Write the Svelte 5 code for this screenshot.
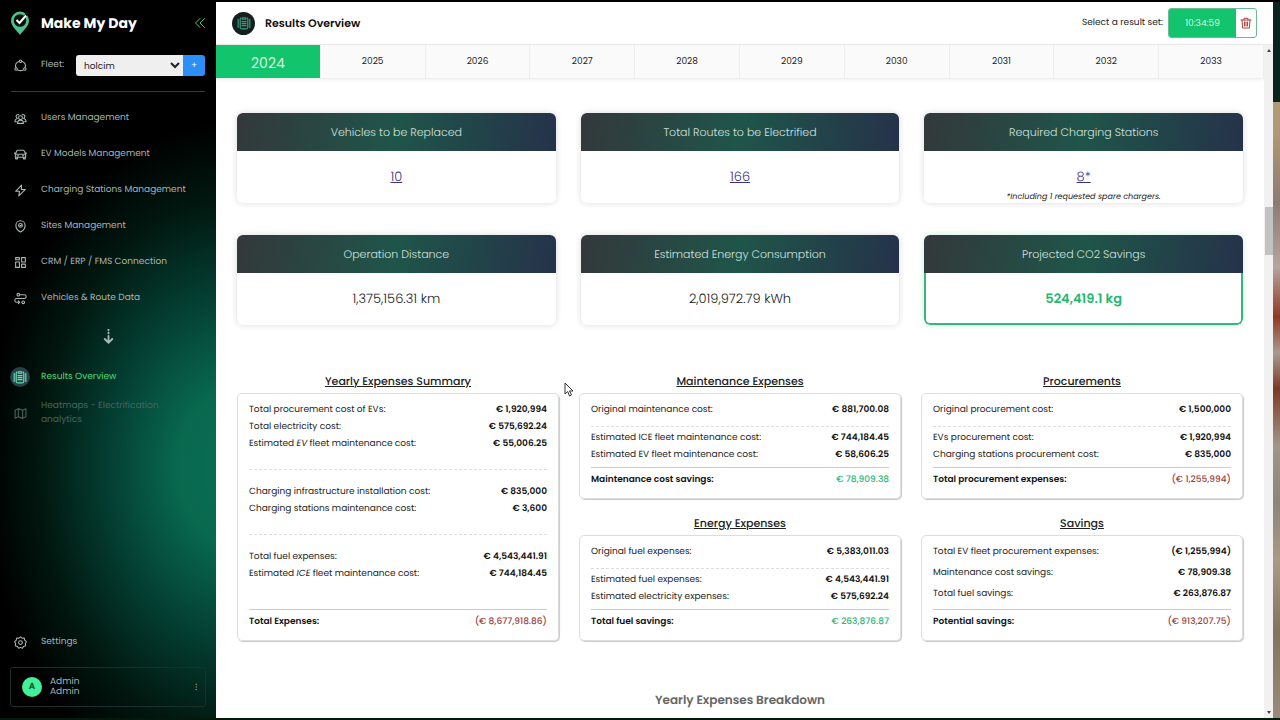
<script lang="ts">
	type Row = { label: string; em?: string; rest?: string; value: string };
	type Sheet = {
		title: string;
		groups: Row[][];
		total: Row;
		tone: 'good' | 'bad';
		kind?: 'tall' | 'loose';
	};

	const menu = [
		{ icon: 'users', label: 'Users Management' },
		{ icon: 'car', label: 'EV Models Management' },
		{ icon: 'bolt', label: 'Charging Stations Management' },
		{ icon: 'pin', label: 'Sites Management' },
		{ icon: 'grid', label: 'CRM / ERP / FMS Connection' },
		{ icon: 'route', label: 'Vehicles & Route Data' }
	];

	const years = [2024, 2025, 2026, 2027, 2028, 2029, 2030, 2031, 2032, 2033];
	let year = $state(2024);
	let fleet = $state('holcim');

	const stats = [
		{ title: 'Vehicles to be Replaced', value: '10', link: true },
		{ title: 'Total Routes to be Electrified', value: '166', link: true },
		{
			title: 'Required Charging Stations',
			value: '8*',
			link: true,
			note: '*Including 1 requested spare chargers.'
		},
		{ title: 'Operation Distance', value: '1,375,156.31 km' },
		{ title: 'Estimated Energy Consumption', value: '2,019,972.79 kWh' },
		{ title: 'Projected CO2 Savings', value: '524,419.1 kg', highlight: true }
	];

	const sheets: Sheet[] = [
		{
			title: 'Yearly Expenses Summary',
			kind: 'tall',
			groups: [
				[
					{ label: 'Total procurement cost of EVs:', value: '€ 1,920,994' },
					{ label: 'Total electricity cost:', value: '€ 575,692.24' },
					{ label: 'Estimated ', em: 'EV', rest: ' fleet maintenance cost:', value: '€ 55,006.25' }
				],
				[
					{ label: 'Charging infrastructure installation cost:', value: '€ 835,000' },
					{ label: 'Charging stations maintenance cost:', value: '€ 3,600' }
				],
				[
					{ label: 'Total fuel expenses:', value: '€ 4,543,441.91' },
					{ label: 'Estimated ', em: 'ICE', rest: ' fleet maintenance cost:', value: '€ 744,184.45' }
				]
			],
			total: { label: 'Total Expenses:', value: '(€ 8,677,918.86)' },
			tone: 'bad'
		},
		{
			title: 'Maintenance Expenses',
			groups: [
				[{ label: 'Original maintenance cost:', value: '€ 881,700.08' }],
				[
					{ label: 'Estimated ICE fleet maintenance cost:', value: '€ 744,184.45' },
					{ label: 'Estimated EV fleet maintenance cost:', value: '€ 58,606.25' }
				]
			],
			total: { label: 'Maintenance cost savings:', value: '€ 78,909.38' },
			tone: 'good'
		},
		{
			title: 'Procurements',
			groups: [
				[{ label: 'Original procurement cost:', value: '€ 1,500,000' }],
				[
					{ label: 'EVs procurement cost:', value: '€ 1,920,994' },
					{ label: 'Charging stations procurement cost:', value: '€ 835,000' }
				]
			],
			total: { label: 'Total procurement expenses:', value: '(€ 1,255,994)' },
			tone: 'bad'
		},
		{
			title: 'Energy Expenses',
			groups: [
				[{ label: 'Original fuel expenses:', value: '€ 5,383,011.03' }],
				[
					{ label: 'Estimated fuel expenses:', value: '€ 4,543,441.91' },
					{ label: 'Estimated electricity expenses:', value: '€ 575,692.24' }
				]
			],
			total: { label: 'Total fuel savings:', value: '€ 263,876.87' },
			tone: 'good'
		},
		{
			title: 'Savings',
			kind: 'loose',
			groups: [
				[
					{ label: 'Total EV fleet procurement expenses:', value: '(€ 1,255,994)' },
					{ label: 'Maintenance cost savings:', value: '€ 78,909.38' },
					{ label: 'Total fuel savings:', value: '€ 263,876.87' }
				]
			],
			total: { label: 'Potential savings:', value: '(€ 913,207.75)' },
			tone: 'bad'
		}
	];
</script>

{#snippet icon(name: string)}
	<svg class="icon" viewBox="0 0 24 24" aria-hidden="true">
		{#if name === 'users'}
			<circle cx="12" cy="10.500" r="3.500" />
			<path d="M6.500 21c0-3.800 2.300-6 5.500-6s5.500 2.200 5.500 6z" />
			<path d="M6.500 11.500A3.500 3.500 0 1 1 9 5M17.500 11.500A3.500 3.500 0 1 0 15 5M1.500 18c.2-3 1.600-5 4-6M22.500 18c-.2-3-1.600-5-4-6M1.500 18h3M19.500 18h3" />
		{:else if name === 'car'}
			<path d="M2.500 11.500 5 5.500Q5.500 4 7 4h10q1.500 0 2 1.500l2.500 6V17h-19zM2.500 11.500h19M3 17v3h3.500v-3M17.500 17v3H21v-3M6 14.300h2.500M15.500 14.300H18M1 9.500h2M21 9.500h2" />
		{:else if name === 'bolt'}
			<path d="M14 2 3 13.500h7L9 22l12-12h-7.500z" />
		{:else if name === 'pin'}
			<path d="M12 22c-3-1.500-8.500-5.500-8.500-12a8.500 8.500 0 0 1 17 0c0 6.500-5.500 10.500-8.500 12z" />
			<circle cx="12" cy="10" r="3.500" />
			<path d="m11 10 1 1 2-2" />
		{:else if name === 'grid'}
			<path d="M3 3h7v4H3zM3 11h7v10H3zM14 3h7v8h-7zM14 15h7v6h-7z" />
		{:else if name === 'route'}
			<circle cx="8" cy="5" r="2.500" />
			<circle cx="17" cy="19" r="2.500" />
			<path d="M10.500 5H19a3.500 3.500 0 0 1 0 7H5a3.500 3.500 0 0 0 0 7h5M8 16.500l2.500 2.500L8 21.500" />
		{:else if name === 'fleet'}
			<path d="M9 4.500a8 8 0 0 0-5.500 11M15 4.500a8 8 0 0 1 5.500 11M7 20.500q5 2 10 0" />
			<circle cx="12" cy="4" r="2.300" />
			<circle cx="4" cy="18.500" r="2.300" />
			<circle cx="20" cy="18.500" r="2.300" />
		{:else if name === 'map'}
			<path d="m2 6 6-3 8 3 6-3v15l-6 3-8-3-6 3zM8 3v15M16 6v15" />
		{:else if name === 'clipboard'}
			<path d="M9 3h6v2.500H9zM8.500 9.500h7M8.500 13h7M8.500 16.500h7M8 22h8" />
			<path d="M6.500 3.500Q5.500 4 5.500 6v13q0 2 1 2.500M17.500 3.500q1 .5 1 2.500v13q0 2-1 2.500M2 5.500v14M22 5.500v14" />
		{:else if name === 'gear'}
			<path d="m12 1.500 3 2.500 4-.3.800 4 3 2.800-1.800 3.500.500 4-3.800 1.200L15.500 22.500 12 21l-3.500 1.500-2.200-3.300L2.500 18l.500-4-1.800-3.500 3-2.800.8-4L9 4z" />
			<circle cx="12" cy="12.200" r="3.500" />
		{:else if name === 'down'}
			<path d="M12 1v1M12 6v1M12 11v10M6 16l6 6 6-6" />
		{:else if name === 'collapse'}
			<path d="m12 3-9 9 9 9M21 3l-9 9 9 9" />
		{:else if name === 'trash'}
			<path d="M2 6h20M8 6V2.500h8V6M4 6l1.200 16h13.600L20 6M9 10v8M12 10v8M15 10v8" />
		{/if}
	</svg>
{/snippet}

{#snippet line(row: Row)}
	<div class="line">
		<dt>{row.label}{#if row.em}<em>{row.em}</em>{row.rest}{/if}</dt>
		<dd>{row.value}</dd>
	</div>
{/snippet}

<div class="desktop">
	<aside class="sidebar">
		<div class="brand">
			<svg class="logo" viewBox="0 0 20 24" aria-hidden="true">
				<path class="drop" d="M10 24C7 19.500 1 15.500 1 9.500a9 9 0 0 1 18 0C19 15.500 13 19.500 10 24z" />
				<circle cx="10" cy="9.500" r="6.300" />
				<path class="gap" d="m14 6 4.500-4.500" />
				<path class="tick" d="m6.500 9 3 3L16 4.500" />
			</svg>
			<strong>Make My Day</strong>
			<button class="collapse" aria-label="Collapse menu">{@render icon('collapse')}</button>
		</div>

		<div class="fleet">
			{@render icon('fleet')}
			<label for="fleet">Fleet:</label>
			<select id="fleet" bind:value={fleet}>
				<option value="holcim">holcim</option>
			</select>
			<button aria-label="Add fleet">+</button>
		</div>

		<nav>
			{#each menu as item}
				<a href="#{item.icon}">{@render icon(item.icon)}<span>{item.label}</span></a>
			{/each}
			<div class="down">{@render icon('down')}</div>
			<a class="active" href="#results">
				<i class="badge">{@render icon('clipboard')}</i><span>Results Overview</span>
			</a>
			<a class="muted" href="#heatmaps">{@render icon('map')}<span>Heatmaps - Electrification analytics</span></a>
			<a class="settings" href="#settings">{@render icon('gear')}<span>Settings</span></a>
		</nav>

		<div class="account">
			<span class="avatar">A</span>
			<div class="who">
				<span>Admin</span>
				<span>Admin</span>
			</div>
			<button aria-label="Account menu">⁝</button>
		</div>
	</aside>

	<main>
		<header>
			<i class="badge dark">{@render icon('clipboard')}</i>
			<h1>Results Overview</h1>
			<span class="pick">Select a result set:</span>
			<div class="result-set">
				<button class="time">10:34:59</button>
				<button class="delete" aria-label="Delete result set">{@render icon('trash')}</button>
			</div>
		</header>

		<div class="body">
			<div class="page">
				<div class="years">
					{#each years as y}
						<button class:selected={y === year} onclick={() => (year = y)}>{y}</button>
					{/each}
				</div>

				<section class="stats">
					{#each stats as stat}
						<article class="stat" class:highlight={stat.highlight}>
							<h2>{stat.title}</h2>
							<div class="value">
								{#if stat.link}
									<a href="#details">{stat.value}</a>
								{:else}
									<span>{stat.value}</span>
								{/if}
								{#if stat.note}<small>{stat.note}</small>{/if}
							</div>
						</article>
					{/each}
				</section>

				<section class="sheets">
					{#each sheets as sheet}
						<article class="sheet {sheet.kind ?? ''}">
							<h3>{sheet.title}</h3>
							<dl>
								{#each sheet.groups as group}
									<div class="group">
										{#each group as row}
											{@render line(row)}
										{/each}
									</div>
								{/each}
								<div class="total {sheet.tone}">{@render line(sheet.total)}</div>
							</dl>
						</article>
					{/each}
				</section>

				<h2 class="breakdown">Yearly Expenses Breakdown</h2>
			</div>

			<div class="scrollbar" aria-hidden="true">
				<i class="up"></i>
				<i class="thumb"></i>
				<i class="end"></i>
			</div>
		</div>
	</main>

	<div class="wallpaper"></div>

	<svg class="cursor" viewBox="0 0 10 15" aria-hidden="true">
		<path d="M1 1v11l2.700-2.500L5.500 14l2-1-2-4H9z" />
	</svg>
</div>

<style>
	:global(body) {
		margin: 0;
		background: #000;
	}

	.desktop,
	.desktop * {
		box-sizing: border-box;
	}

	.desktop {
		position: relative;
		display: flex;
		min-height: 100vh;
		padding: 2px 0;
		background: linear-gradient(#000 50%, #04180c 50%);
		font-family: Poppins, Inter, 'Open Sans', sans-serif;
		font-size: 9px;
		color: #222;
		text-rendering: geometricPrecision;
	}

	button {
		margin: 0;
		padding: 0;
		border: 0;
		background: none;
		font: inherit;
		color: inherit;
		cursor: pointer;
	}

	.icon {
		flex: none;
		width: 12px;
		height: 12px;
		fill: none;
		stroke: currentColor;
		stroke-width: 2;
		stroke-linecap: round;
		stroke-linejoin: round;
	}

	/* sidebar */
	.sidebar {
		flex: none;
		display: flex;
		flex-direction: column;
		width: 216px;
		padding: 8px 10px 11px;
		background: radial-gradient(ellipse 230px 320px at 108% 65%, #086d55 0, #08694f 24%, #043f33 54%, #01170f 84%, #000 108%) #000;
		color: #a9b5b4;
	}

	.brand {
		display: flex;
		align-items: center;
		height: 26px;
	}

	.logo {
		width: 20px;
		height: 24px;
		margin-right: 11px;
	}

	.logo .drop {
		fill: #4fc08d;
	}

	.logo circle {
		fill: #04120d;
	}

	.logo .gap {
		stroke: #04120d;
		stroke-width: 2;
	}

	.logo .tick {
		fill: none;
		stroke: #fff;
		stroke-width: 2;
	}

	.brand strong {
		font-size: 14px;
		font-weight: 700;
		color: #fff;
	}

	.collapse {
		display: flex;
		margin-left: auto;
		color: #43c787;
	}

	.fleet {
		display: flex;
		align-items: center;
		margin: 0 1px;
		padding: 19px 0 15px;
		border-bottom: 1px solid #333b39;
	}

	.fleet .icon {
		width: 13px;
		height: 13px;
		margin: 0 14px 0 3px;
	}

	.fleet label {
		width: 35px;
	}

	.fleet select {
		flex: 1;
		min-width: 0;
		height: 21px;
		padding: 0 0 0 4px;
		border: 0;
		border-radius: 3px 0 0 3px;
		background: #efefef;
		font: inherit;
		color: #222;
	}

	.fleet button {
		width: 22px;
		height: 21px;
		border-radius: 0 3px 3px 0;
		background: #2b8ff5;
		color: #fff;
	}

	nav {
		flex: 1;
		display: flex;
		flex-direction: column;
		padding-top: 8px;
	}

	nav a {
		display: flex;
		align-items: center;
		gap: 14px;
		height: 36px;
		padding-left: 4px;
		line-height: 14px;
		color: inherit;
		text-decoration: none;
	}

	nav a > .icon {
		width: 13px;
		height: 13px;
	}

	.down {
		display: flex;
		justify-content: center;
		padding: 13px 0 15px;
	}

	.down .icon {
		width: 15px;
		height: 15px;
		stroke-width: 3;
	}

	.badge {
		flex: none;
		display: grid;
		place-items: center;
		width: 20px;
		height: 20px;
		border-radius: 50%;
		background: #2a4247;
		color: #5fe3b3;
	}

	.badge .icon {
		width: 14px;
		height: 14px;
	}

	nav .active {
		gap: 11px;
		padding-left: 0;
		color: #4ade80;
	}

	nav .muted {
		padding-right: 30px;
		color: #45665f;
	}

	nav .settings {
		margin-top: auto;
		margin-bottom: 7px;
	}

	.account {
		display: flex;
		align-items: center;
		height: 40px;
		padding: 0 8px 0 11px;
		border: 1px solid #1c2f2b;
		border-radius: 3px;
	}

	.avatar {
		display: grid;
		place-items: center;
		width: 20px;
		height: 20px;
		margin-right: 8px;
		border-radius: 50%;
		background: #42f09a;
		font-weight: 600;
		color: #0c4a30;
	}

	.who {
		flex: 1;
		display: grid;
		line-height: 10px;
	}

	/* main column */
	main {
		flex: 1;
		display: flex;
		flex-direction: column;
		min-width: 0;
		background: #fff;
	}

	header {
		display: flex;
		align-items: center;
		height: 43px;
		padding: 0 16px;
		border-bottom: 1px solid #eee;
	}

	.badge.dark {
		width: 23px;
		height: 23px;
		background: #14201f;
		color: #3f9d7a;
	}

	header h1 {
		flex: 1;
		margin: 0 0 0 10px;
		font-size: 11px;
		font-weight: 600;
		color: #111;
	}

	.pick {
		margin-right: 5px;
	}

	.result-set {
		display: flex;
		height: 30px;
		border: 1px solid #6db896;
		border-radius: 3px;
		overflow: hidden;
	}

	.time {
		width: 67px;
		background: #12c46b;
		color: #d5f7e4;
	}

	.delete {
		display: grid;
		place-items: center;
		width: 20px;
		color: #b5403c;
	}

	.body {
		flex: 1;
		display: flex;
	}

	.page {
		flex: 1;
		min-width: 0;
	}

	.years {
		display: flex;
		height: 33px;
		background: #fafafa;
		box-shadow: 0 1px 4px #0000001a;
	}

	.years button {
		flex: 1;
		border-right: 1px solid #eee;
	}

	.years .selected {
		padding-top: 3px;
		background: #12c46b;
		font-size: 14px;
		color: #d5f7e4;
	}

	.stats {
		display: grid;
		grid-template-columns: repeat(3, 1fr);
		gap: 32px 25px;
		padding: 35px 21px 0;
	}

	.stat {
		display: flex;
		flex-direction: column;
		min-height: 90px;
		border-radius: 6px;
		overflow: hidden;
		box-shadow: 0 0 6px #00000026;
	}

	.stat h2 {
		margin: 0;
		background: linear-gradient(100deg, #33383b, #1f5549 50%, #25324a);
		font-size: 11px;
		font-weight: 300;
		line-height: 38px;
		text-align: center;
		color: #d3e2df;
	}

	.value {
		flex: 1;
		display: flex;
		flex-direction: column;
		align-items: center;
		padding-top: 16px;
		font-size: 13px;
		font-weight: 300;
		line-height: 20px;
	}

	.value a {
		color: #3d2f82;
	}

	.value small {
		margin-top: 3px;
		font-size: 8px;
		font-style: italic;
		font-weight: 400;
		line-height: 13px;
	}

	.highlight {
		box-shadow: 0 0 6px #12c46b40;
	}

	.highlight .value {
		border: solid #37b57c;
		border-width: 0 2px 2px;
		border-radius: 0 0 6px 6px;
		font-weight: 600;
		color: #1fb970;
	}

	.sheets {
		display: grid;
		grid-template-columns: repeat(3, 1fr);
		gap: 16px 20px;
		padding: 48px 21px 0;
	}

	.sheet {
		display: flex;
		flex-direction: column;
	}

	.tall {
		grid-row: span 2;
	}

	.sheet h3 {
		margin: 0 0 4px;
		font-size: 11px;
		font-weight: 500;
		line-height: 16px;
		text-align: center;
		text-decoration: underline;
	}

	dl {
		flex: 1;
		display: flex;
		flex-direction: column;
		margin: 0;
		padding: 8px 11px 9px;
		border: 1px solid #ddd;
		border-radius: 5px;
		box-shadow: 1px 1px 1px #00000038;
		line-height: 17px;
	}

	.group {
		padding: 3px 0;
	}

	.group:first-child {
		padding: 0 0 7px;
	}

	.group + .group {
		border-top: 1px dashed #ddd;
	}

	.tall .group {
		padding: 14px 0 16px;
	}

	.tall .group:first-child {
		padding-top: 0;
	}

	.loose .group {
		display: grid;
		gap: 4px;
		padding-bottom: 0;
	}

	.line {
		display: flex;
		justify-content: space-between;
	}

	dd {
		margin: 0;
		font-weight: 600;
		color: #111;
	}

	.total {
		margin-top: auto;
		padding-top: 4px;
		border-top: 1px solid #ccc;
	}

	.total :global(dt) {
		font-weight: 600;
		color: #111;
	}

	.total :global(dd) {
		font-weight: 500;
	}

	.bad :global(dd) {
		color: #a0443f;
	}

	.good :global(dd) {
		color: #2db678;
	}

	.breakdown {
		margin: 52px 0 9px;
		font-size: 12px;
		font-weight: 600;
		line-height: 16px;
		text-align: center;
		color: #666;
	}

	.scrollbar {
		flex: none;
		display: flex;
		flex-direction: column;
		align-items: center;
		width: 9px;
		padding: 4px 0;
		background: #f1f1f1;
	}

	.scrollbar .up,
	.scrollbar .end {
		border: 2px solid transparent;
	}

	.scrollbar .up {
		border-bottom: 3px solid #444;
		border-top: 0;
	}

	.scrollbar .end {
		margin-top: auto;
		border-top: 3px solid #444;
		border-bottom: 0;
	}

	.thumb {
		width: 8px;
		height: 48px;
		margin-top: 155px;
		background: #c1c3c3;
	}

	.wallpaper {
		flex: none;
		width: 7px;
		background: linear-gradient(#0b231e 0 14%, #b09a76 14% 18%, #8d7a72 28%, #b7a3a0 37%, #8e3a22 44%, #a89a90 49%, #7c3a26 54%, #a0968a 62%, #8c857a 70%, #a99a86 78%, #857262 88%, #9a8a7a);
	}

	.cursor {
		position: absolute;
		left: 564px;
		top: 382px;
		width: 10px;
		height: 15px;
		fill: #fff;
		stroke: #333;
	}
</style>
